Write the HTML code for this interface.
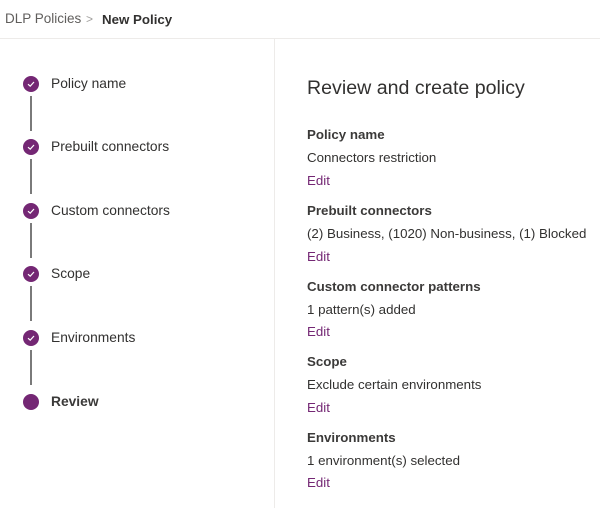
<!DOCTYPE html>
<html><head><meta charset="utf-8"><style>
*{margin:0;padding:0;box-sizing:border-box}
body{width:600px;height:508px;background:#fff;font-family:"Liberation Sans",sans-serif;color:#323130;position:relative;overflow:hidden}
.a{position:absolute;white-space:nowrap;line-height:16px}
.c{position:absolute;left:23px;width:16px;height:16px;border-radius:50%;background:#742774}
.c svg{position:absolute;left:3px;top:3px}
.l{position:absolute;left:30px;width:2px;background:#7a7a7a}
.s{left:51px;font-size:13.8px;color:#323130}
.h{left:307px;font-size:13.3px;font-weight:bold;color:#3b3a39}
.v{left:307px;font-size:13.3px}
.e{left:307px;font-size:13.3px;color:#742774}
</style></head><body>
<div class="a" style="left:5px;top:11px;font-size:13.5px;color:#605e5c">DLP Policies</div>
<div class="a" style="left:86px;top:11px;font-size:12px;color:#a19f9d">&gt;</div>
<div class="a" style="left:102px;top:12px;font-size:13.3px;font-weight:bold;color:#323130">New Policy</div>
<div style="position:absolute;left:0;top:38px;width:600px;height:1px;background:#edebe9"></div>
<div style="position:absolute;left:274px;top:39px;width:1px;height:469px;background:#edebe9"></div>

<div class="c" style="top:76px"><svg width="10" height="10" viewBox="0 0 10 10"><path d="M2 5.2 L4.2 7.2 L8 3" stroke="#fff" stroke-width="1.2" fill="none"/></svg></div>
<div class="l" style="top:96px;height:35px"></div>
<div class="c" style="top:139px"><svg width="10" height="10" viewBox="0 0 10 10"><path d="M2 5.2 L4.2 7.2 L8 3" stroke="#fff" stroke-width="1.2" fill="none"/></svg></div>
<div class="l" style="top:159px;height:35px"></div>
<div class="c" style="top:203px"><svg width="10" height="10" viewBox="0 0 10 10"><path d="M2 5.2 L4.2 7.2 L8 3" stroke="#fff" stroke-width="1.2" fill="none"/></svg></div>
<div class="l" style="top:223px;height:35px"></div>
<div class="c" style="top:266px"><svg width="10" height="10" viewBox="0 0 10 10"><path d="M2 5.2 L4.2 7.2 L8 3" stroke="#fff" stroke-width="1.2" fill="none"/></svg></div>
<div class="l" style="top:286px;height:35px"></div>
<div class="c" style="top:330px"><svg width="10" height="10" viewBox="0 0 10 10"><path d="M2 5.2 L4.2 7.2 L8 3" stroke="#fff" stroke-width="1.2" fill="none"/></svg></div>
<div class="l" style="top:350px;height:35px"></div>
<div class="c" style="top:394px"></div>

<div class="a s" style="top:76px">Policy name</div>
<div class="a s" style="top:139px">Prebuilt connectors</div>
<div class="a s" style="top:203px">Custom connectors</div>
<div class="a s" style="top:266px">Scope</div>
<div class="a s" style="top:330px">Environments</div>
<div class="a s" style="top:394px;font-weight:bold;color:#3b3a39">Review</div>

<div class="a" style="left:307px;top:76px;font-size:19.6px;line-height:24px;color:#323130">Review and create policy</div>

<div class="a h" style="top:127px">Policy name</div>
<div class="a v" style="top:150px">Connectors restriction</div>
<div class="a e" style="top:173px">Edit</div>
<div class="a h" style="top:203px">Prebuilt connectors</div>
<div class="a v" style="top:226px">(2) Business, (1020) Non-business, (1) Blocked</div>
<div class="a e" style="top:249px">Edit</div>
<div class="a h" style="top:279px">Custom connector patterns</div>
<div class="a v" style="top:302px">1 pattern(s) added</div>
<div class="a e" style="top:324px">Edit</div>
<div class="a h" style="top:354px">Scope</div>
<div class="a v" style="top:377px">Exclude certain environments</div>
<div class="a e" style="top:400px">Edit</div>
<div class="a h" style="top:430px">Environments</div>
<div class="a v" style="top:453px">1 environment(s) selected</div>
<div class="a e" style="top:475px">Edit</div>
</body></html>
